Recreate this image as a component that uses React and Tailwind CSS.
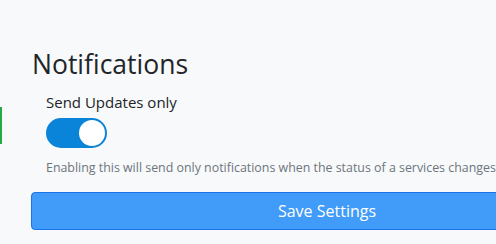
import React, { useState } from 'react';

const Toggle = ({ checked, onChange }) => (
    <button
        type="button"
        onClick={() => onChange(!checked)}
        className={`relative flex items-center w-[61px] h-[30px] rounded-full p-[2px] ${checked ? 'bg-[#0a84d8] justify-end' : 'bg-gray-300 justify-start'}`}
    >
        <span className="block w-[26px] h-[26px] rounded-full bg-white" />
    </button>
);

const App = () => {
    const [onlyUpdates, setOnlyUpdates] = useState(true);
    return (
        <div className="w-[496px] h-[244px] overflow-hidden bg-[#f8f9fa] font-['Open_Sans',sans-serif]">
            <div className="w-[592px] pl-[31px] pt-[46px]">
                <h2 className="pl-[1px] text-[26.5px] leading-[36px] text-[#212529]">Notifications</h2>
                <div className="relative pl-[15px] pt-[10px]">
                    <div className="absolute left-[-31px] top-[25px] w-[2px] h-[37px] bg-[#28a745]" />
                    <label className="block text-[15px] leading-[20px] text-[#212529]">Send Updates only</label>
                    <div className="mt-[6px]">
                        <Toggle checked={onlyUpdates} onChange={setOnlyUpdates} />
                    </div>
                    <p className="mt-[12px] text-[12.4px] leading-[16px] text-[#6c757d] whitespace-nowrap">
                        Enabling this will send only notifications when the status of a services changes
                    </p>
                </div>
                <button className="mt-[16px] w-[592px] h-[38px] rounded-[4px] border border-[#1a73e8] bg-[#419bf9] text-white text-[16px]">
                    Save Settings
                </button>
            </div>
        </div>
    );
};

export default App;
